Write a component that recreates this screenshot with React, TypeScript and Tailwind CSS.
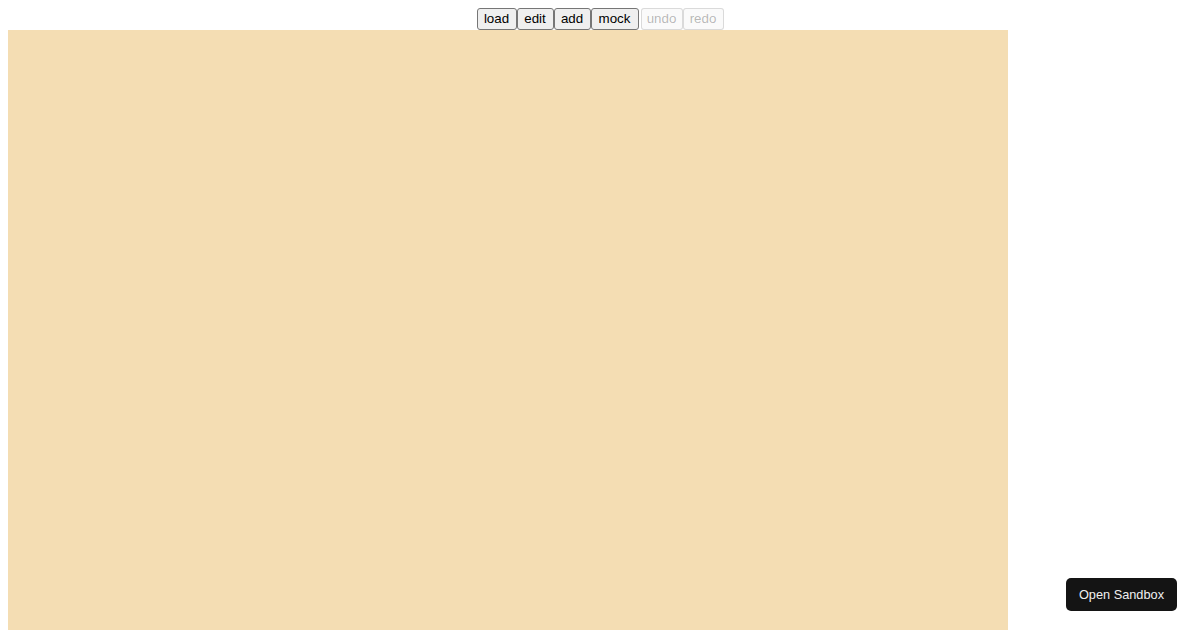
export default function App() {
  const base =
    "h-[22px] px-0 rounded-[3px] text-[13.33px] leading-none [font-family:'Liberation_Sans',Arial,sans-serif] flex items-center justify-center";
  const btn = base + " border border-[#767676] bg-[#efefef] text-black";
  const dis = base + " border border-[#76767640] bg-[#efefef4d] text-[#1010104d]";
  return (
    <div className="w-full bg-white">
      <div className="flex justify-center pt-2">
        <button className={btn + " w-[40px]"}>load</button>
        <button className={btn + " w-[37px]"}>edit</button>
        <button className={btn + " w-[37px]"}>add</button>
        <button className={btn + " w-[48px]"}>mock</button>
        <button className={dis + " w-[42px] ml-[2px]"} disabled>
          undo
        </button>
        <button className={dis + " w-[41px]"} disabled>
          redo
        </button>
      </div>
      <div className="ml-2 w-[1000px] h-[600px] bg-[#f4ddb3]" />
      <button className="fixed right-[23px] bottom-[19px] w-[111px] h-[33px] rounded-[5px] bg-[#141414] text-[#f0f0f0] text-[12.75px] [font-family:'Liberation_Sans',Arial,sans-serif]">
        Open Sandbox
      </button>
    </div>
  );
}
